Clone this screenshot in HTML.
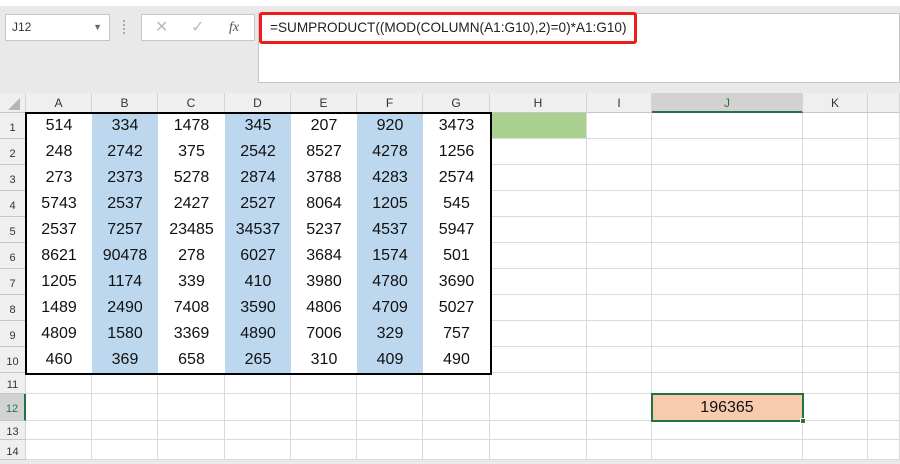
<!DOCTYPE html>
<html><head><meta charset="utf-8"><style>
body{margin:0;width:900px;height:460px;overflow:hidden;background:#e9e9e9;font-family:"Liberation Sans",sans-serif;position:relative}
div{position:absolute;box-sizing:border-box}
.h{background:#efefef;border-right:1px solid #d4d4d4;border-bottom:1px solid #c6c6c6;font-size:12px;color:#333;text-align:center}
.c{font-size:16px;color:#111;text-align:center;line-height:26px}
</style></head><body>
<div style="left:0;top:0;width:900px;height:6px;background:#fff"></div>
<div style="left:5px;top:14px;width:105px;height:27px;background:#fff;border:1px solid #c6c6c6;font-size:12px;line-height:25px;padding-left:6px;color:#333">J12<span style="position:absolute;right:7px;top:0;font-size:9px;color:#666">▼</span></div>
<div style="left:123px;top:20px;width:3px;height:14px;border-left:2px dotted #aaa"></div>
<div style="left:141px;top:14px;width:114px;height:27px;background:#fff;border:1px solid #c6c6c6;color:#bbb;font-size:16px;line-height:25px"><span style="position:absolute;left:13px">✕</span><span style="position:absolute;left:49px">✓</span><span style="position:absolute;left:87px;color:#555;font-style:italic;font-family:'Liberation Serif';font-size:14px">fx</span></div>
<div style="left:258px;top:13px;width:642px;height:70px;background:#fff;border:1px solid #c6c6c6"></div>
<div style="left:259px;top:12px;width:378px;height:32px;border:3px solid #ee1c1c;border-radius:3px;font-size:13.6px;line-height:26px;padding-left:8px;color:#222;white-space:nowrap">=SUMPRODUCT((MOD(COLUMN(A1:G10),2)=0)*A1:G10)</div>
<div id="s" style="left:0;top:93px;width:900px;height:367px;background:#fff"></div>
<script>
var cols=[26,92,158,225,291,357,423,490,587,652,803,868,900],names="ABCDEFGHIJK";
var rows=[113];for(var i=0;i<10;i++)rows.push(113+26*(i+1));rows.push(394,421,440,460);
var data=[[514,334,1478,345,207,920,3473],[248,2742,375,2542,8527,4278,1256],[273,2373,5278,2874,3788,4283,2574],[5743,2537,2427,2527,8064,1205,545],[2537,7257,23485,34537,5237,4537,5947],[8621,90478,278,6027,3684,1574,501],[1205,1174,339,410,3980,4780,3690],[1489,2490,7408,3590,4806,4709,5027],[4809,1580,3369,4890,7006,329,757],[460,369,658,265,310,409,490]];
var h='';
for(var r=0;r<14;r++)for(var c=0;c<12;c++){var x=cols[c],y=rows[r],w=cols[c+1]-x,hh=rows[r+1]-y;
var bg='#fff',br='1px solid #dadada';
if(r<10&&c<7){br='none';if(c%2==1)bg='#bdd7ee';}
if(r==0&&c==7)bg='#a9d08e';
if(r==11&&c==9)bg='#f8cbad';
var t=(r<10&&c<7)?data[r][c]:'';
if(r==11&&c==9)t='196365';
h+='<div class="c" style="left:'+x+'px;top:'+y+'px;width:'+w+'px;height:'+hh+'px;background:'+bg+';border-right:'+br+';border-bottom:'+br+';line-height:'+hh+'px">'+t+'</div>';}
for(var c=0;c<12;c++){var x=cols[c],w=cols[c+1]-x;var j=c==9;
h+='<div class="h" style="left:'+x+'px;top:93px;width:'+w+'px;height:20px;line-height:20px;'+(j?'background:#d2d2d2;border-bottom:2px solid #217346;color:#217346':'')+'">'+(names[c]||'')+'</div>';}
for(var r=0;r<14;r++){var y=rows[r],hh=rows[r+1]-y;var j=r==11;
h+='<div class="h" style="left:0;top:'+y+'px;width:26px;height:'+hh+'px;line-height:'+(hh+4)+'px;font-size:11px;'+(j?'background:#d2d2d2;border-right:2px solid #217346;color:#217346':'')+'">'+(r+1)+'</div>';}
h+='<div class="h" style="left:0;top:93px;width:26px;height:20px"><div style="left:8px;top:5px;width:0;height:0;border-left:12px solid transparent;border-bottom:12px solid #b5b5b5"></div></div>';
h+='<div style="left:25px;top:112px;width:467px;height:263px;border:2px solid #000"></div>';
h+='<div style="left:651px;top:393px;width:153px;height:29px;border:2px solid #217346"></div>';
h+='<div style="left:800px;top:418px;width:6px;height:6px;background:#217346;border:1px solid #fff"></div>';
document.body.insertAdjacentHTML('beforeend',h);
</script>
</body></html>
